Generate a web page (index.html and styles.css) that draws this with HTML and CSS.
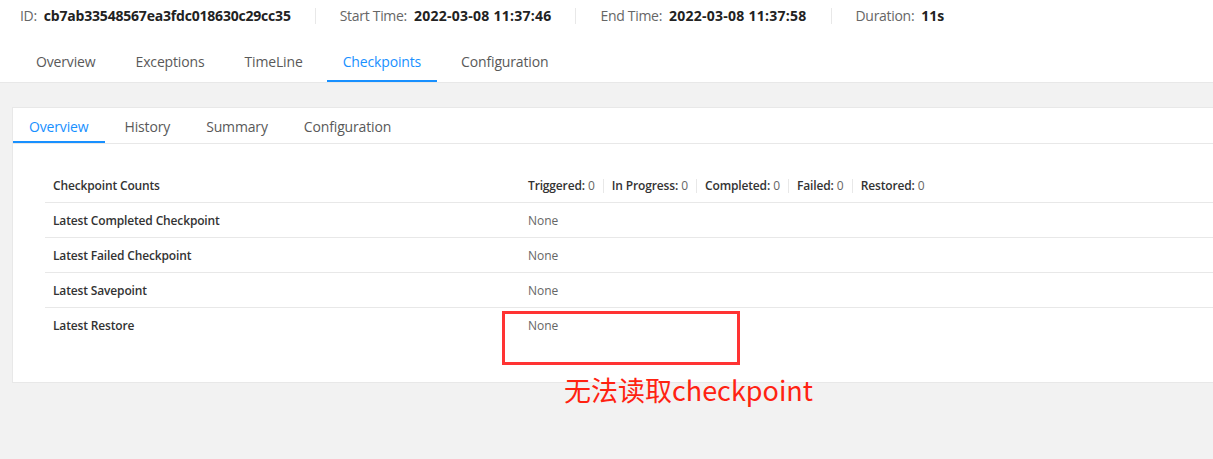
FILE: index.html
```html
<!DOCTYPE html>
<html>
<head>
<meta charset="utf-8">
<link rel="stylesheet" href="styles.css">
</head>
<body>
<div class="page">
  <header class="header">
    <div class="meta">
      <div class="meta-item"><span class="meta-label">ID:</span><span class="meta-value id">cb7ab33548567ea3fdc018630c29cc35</span></div>
      <div class="meta-divider"></div>
      <div class="meta-item"><span class="meta-label">Start Time:</span><span class="meta-value date">2022-03-08 11:37:46</span></div>
      <div class="meta-divider"></div>
      <div class="meta-item"><span class="meta-label">End Time:</span><span class="meta-value date">2022-03-08 11:37:58</span></div>
      <div class="meta-divider"></div>
      <div class="meta-item"><span class="meta-label">Duration:</span><span class="meta-value">11s</span></div>
    </div>
    <nav class="tabs top-tabs">
      <div class="tab">Overview</div>
      <div class="tab">Exceptions</div>
      <div class="tab">TimeLine</div>
      <div class="tab active">Checkpoints</div>
      <div class="tab">Configuration</div>
    </nav>
  </header>
  <main class="content">
    <section class="card">
      <nav class="tabs card-tabs">
        <div class="tab active">Overview</div>
        <div class="tab">History</div>
        <div class="tab">Summary</div>
        <div class="tab">Configuration</div>
      </nav>
      <div class="table">
        <div class="row">
          <div class="cell label">Checkpoint Counts</div>
          <div class="cell value counts">
            <span class="count"><b>Triggered:</b> 0</span>
            <span class="count"><b>In Progress:</b> 0</span>
            <span class="count"><b>Completed:</b> 0</span>
            <span class="count"><b>Failed:</b> 0</span>
            <span class="count"><b>Restored:</b> 0</span>
          </div>
        </div>
        <div class="row">
          <div class="cell label">Latest Completed Checkpoint</div>
          <div class="cell value">None</div>
        </div>
        <div class="row">
          <div class="cell label">Latest Failed Checkpoint</div>
          <div class="cell value">None</div>
        </div>
        <div class="row">
          <div class="cell label">Latest Savepoint</div>
          <div class="cell value">None</div>
        </div>
        <div class="row last">
          <div class="cell label">Latest Restore</div>
          <div class="cell value">None</div>
        </div>
      </div>
    </section>
  </main>
  <div class="annot-box"></div>
  <div class="annot-text">无法读取checkpoint</div>
</div>
</body>
</html>
```
FILE: styles.css
```css
html, body {
  margin: 0;
  padding: 0;
}
body {
  background: #f2f2f2;
  font-family: "Open Sans", "Noto Sans CJK SC", sans-serif;
  overflow: hidden;
  width: 1213px;
  height: 459px;
}
.page {
  position: relative;
  height: 459px;
}
.header {
  background: #fff;
  border-bottom: 1px solid #e8e8e8;
}
.meta {
  display: flex;
  align-items: center;
  height: 32px;
  padding-left: 20px;
  font-size: 14px;
  line-height: 18px;
}
.meta-label {
  color: #666;
  margin-right: 7px;
  letter-spacing: -0.3px;
}
.meta-value {
  color: #222;
  font-weight: 700;
}
.meta-value.id {
  letter-spacing: -0.2px;
}
.meta-value.date {
  letter-spacing: 0.25px;
}
.meta-divider {
  width: 1px;
  height: 16px;
  background: #e8e8e8;
  margin: 0 24px;
}
.tabs {
  display: flex;
  font-size: 14px;
  line-height: 18px;
  color: #595959;
  letter-spacing: -0.15px;
}
.tab {
  border-bottom: 2px solid transparent;
  padding: 0 16px;
}
.tab.active {
  color: #1890ff;
  border-bottom-color: #1890ff;
  font-weight: 500;
}
.top-tabs {
  padding-left: 20px;
  gap: 8px;
}
.top-tabs .tab {
  padding-top: 21px;
  padding-bottom: 9px;
}
.content {
  padding-top: 24px;
}
.card {
  background: #fff;
  border: 1px solid #e8e8e8;
  margin: 0 -40px 0 12px;
  padding-bottom: 24px;
}
.card-tabs {
  gap: 4px;
  border-bottom: 1px solid #e8e8e8;
}
.card-tabs .tab {
  padding-top: 10px;
  padding-bottom: 5px;
}
.table {
  margin: 24px 0 0 32px;
  font-size: 12px;
  line-height: 18px;
}
.row {
  display: flex;
  border-bottom: 1px solid #e8e8e8;
}
.row.last {
  border-bottom: none;
  min-height: 50px;
}
.cell {
  padding: 9px 8px 7px;
}
.label {
  width: 459px;
  color: #333;
  font-weight: 600;
  letter-spacing: -0.15px;
}
.value {
  color: #666;
}
.counts {
  display: flex;
}
.count {
  padding: 0 8px;
  border-left: 1px solid #e8e8e8;
  height: 14px;
  line-height: 14px;
  margin-top: 2px;
}
.count:first-child {
  padding-left: 0;
  border-left: none;
}
.count b {
  color: #333;
  font-weight: 600;
  letter-spacing: -0.15px;
}
.annot-box {
  position: absolute;
  left: 502px;
  top: 311px;
  width: 232px;
  height: 48px;
  border: 3px solid #f33;
}
.annot-text {
  position: absolute;
  left: 564px;
  top: 372px;
  font-size: 27px;
  line-height: 36px;
  color: #f21;
  font-family: "Noto Sans CJK SC", sans-serif;
  white-space: nowrap;
}
```
